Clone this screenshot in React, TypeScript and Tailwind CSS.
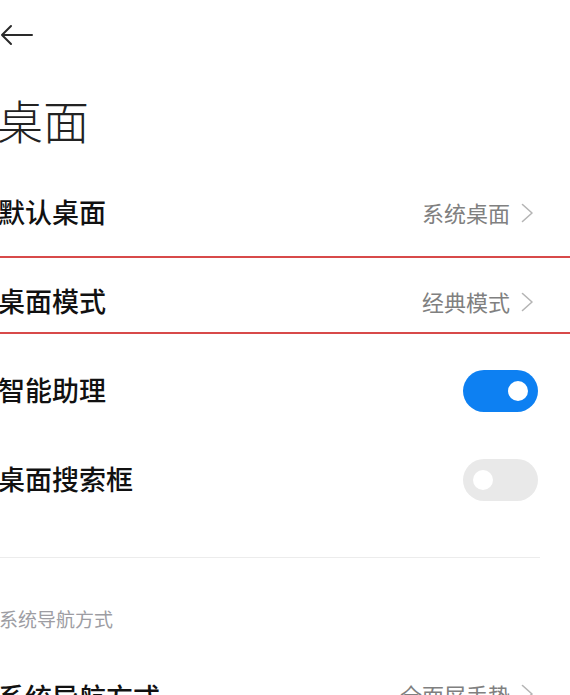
import React from 'react';

const font = { fontFamily: '"Noto Sans CJK SC", "Noto Sans", sans-serif' };

const Chevron: React.FC = () => (
  <svg width="13" height="20" viewBox="0 0 13 20" fill="none">
    <polyline points="1.5,1.5 11,10 1.5,18.5" stroke="#b5b5b5" strokeWidth="1.6" strokeLinecap="round" strokeLinejoin="round" />
  </svg>
);

const Toggle: React.FC<{ on?: boolean }> = ({ on }) => (
  <div
    className={`w-[75px] h-[42px] rounded-full flex items-center px-[10px] ${
      on ? 'bg-[#0d80f2] justify-end' : 'bg-[#e9e9e9] justify-start'
    }`}
  >
    <div className="w-[20px] h-[20px] rounded-full bg-white" />
  </div>
);

interface RowProps {
  label: string;
  value?: string;
  toggle?: boolean;
  on?: boolean;
}

const Row: React.FC<RowProps> = ({ label, value, toggle, on }) => (
  <div className="h-[89px] flex items-center justify-between">
    <div className="ml-[-2px] text-[27px] font-medium text-[#111111]">{label}</div>
    {toggle ? (
      <div className="mr-[32px]">
        <Toggle on={on} />
      </div>
    ) : (
      <div className="flex items-center gap-[11px] mr-[36px]">
        <span className="text-[22px] text-[#808080]">{value}</span>
        <Chevron />
      </div>
    )}
  </div>
);

export default function App() {
  return (
    <div className="relative w-[570px] h-[695px] overflow-hidden bg-white" style={font}>
      <div className="h-[70px] flex items-center">
        <svg width="34" height="22" viewBox="0 0 34 22" fill="none">
          <path d="M32 11H2M11 2L2 11l9 9" stroke="#2a2a2a" strokeWidth="2" strokeLinecap="round" strokeLinejoin="round" />
        </svg>
      </div>
      <div className="h-[98px] flex items-center">
        <h1 className="ml-[-3px] text-[46px] font-light text-[#222222] leading-none">桌面</h1>
      </div>

      <Row label="默认桌面" value="系统桌面" />
      <Row label="桌面模式" value="经典模式" />
      <Row label="智能助理" toggle on />
      <Row label="桌面搜索框" toggle />

      <div className="mt-[33px] w-[540px] h-px bg-[#ececec]" />

      <div className="h-[122px] flex items-center">
        <span className="ml-[-1px] text-[19px] text-[#9d9da3]">系统导航方式</span>
      </div>

      <div className="h-[30px] mt-[-4px] flex items-start justify-between">
        <div className="ml-[-2px] text-[27px] font-medium text-[#111111] leading-none mt-[7px]">系统导航方式</div>
        <div className="flex items-center gap-[11px] mr-[36px] mt-[7px]">
          <span className="text-[22px] text-[#808080] leading-none">全面屏手势</span>
          <Chevron />
        </div>
      </div>

      <div className="absolute left-0 top-[256px] w-full h-[2px] bg-[#d84a4a]" />
      <div className="absolute left-0 top-[332px] w-full h-[2px] bg-[#d84a4a]" />
    </div>
  );
}
